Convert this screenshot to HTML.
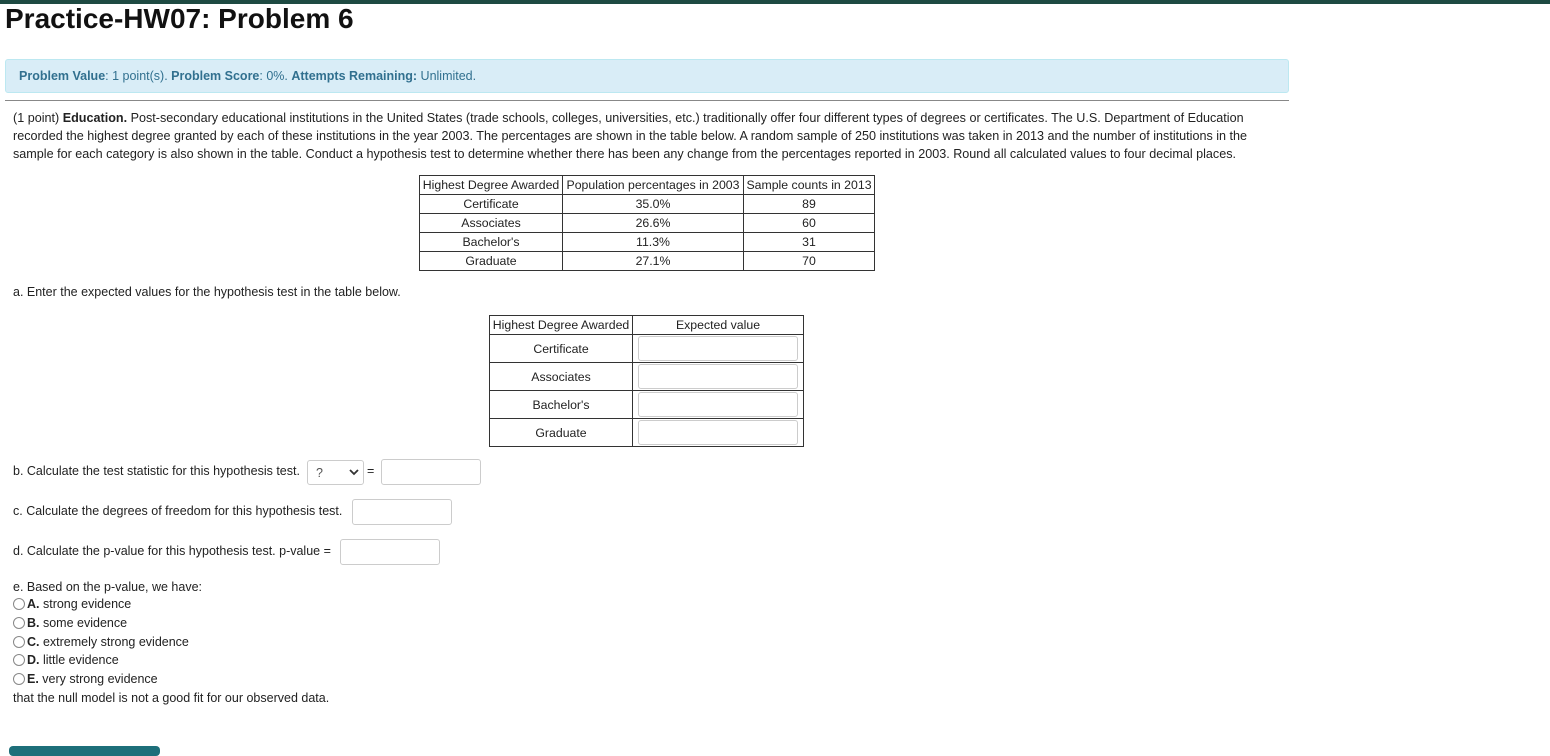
<!DOCTYPE html>
<html><head><meta charset="utf-8"><style>
*{box-sizing:border-box;margin:0;padding:0}
body{width:1550px;height:749px;overflow:hidden;background:#fff;font-family:"Liberation Sans",Arial,sans-serif;font-size:12.5px;color:#222;position:relative}
.a{position:absolute;white-space:nowrap}
.bar{position:absolute;left:0;top:0;width:1550px;height:4px;background:#1e4a42}
h1{position:absolute;left:5px;top:3px;font-size:28px;font-weight:bold;color:#111}
.info{position:absolute;left:5px;top:59px;width:1284px;height:34px;background:#d9edf7;border:1px solid #bce8f1;border-radius:3px;color:#31708f;padding:9px 13px;font-size:12.5px}
.hr{position:absolute;left:5px;top:100px;width:1284px;height:1px;background:#888}
.p{position:absolute;left:13px;top:109px;width:1260px;line-height:18px;font-size:12.6px}
table{position:absolute;border-collapse:collapse;font-size:12.3px}
td{border:1px solid #333;text-align:center;padding:0 1px;white-space:nowrap}
.t1 td{height:19px}
.t2 td{height:28px}
.t2 tr:first-child td{height:19px}
.in{border:1px solid #ccc;border-radius:3px;background:#fff}
.t2 .in{width:160px;height:25px;margin:0 auto}
.rad{display:inline-block;width:12px;height:12px;border:1px solid #888;border-radius:50%;vertical-align:-2px;margin-right:2px}
</style></head><body>
<div class="bar"></div>
<h1>Practice-HW07: Problem 6</h1>
<div class="info"><b>Problem Value</b>: 1 point(s). <b>Problem Score</b>: 0%. <b>Attempts Remaining:</b> Unlimited.</div>
<div class="hr"></div>
<div class="p">(1 point) <b>Education.</b> Post-secondary educational institutions in the United States (trade schools, colleges, universities, etc.) traditionally offer four different types of degrees or certificates. The U.S. Department of Education recorded the highest degree granted by each of these institutions in the year 2003. The percentages are shown in the table below. A random sample of 250 institutions was taken in 2013 and the number of institutions in the sample for each category is also shown in the table. Conduct a hypothesis test to determine whether there has been any change from the percentages reported in 2003. Round all calculated values to four decimal places.</div>
<table class="t1" style="left:419px;top:175px;width:456px">
<tr><td style="width:143px">Highest Degree Awarded</td><td style="width:181px">Population percentages in 2003</td><td>Sample counts in 2013</td></tr>
<tr><td>Certificate</td><td>35.0%</td><td>89</td></tr>
<tr><td>Associates</td><td>26.6%</td><td>60</td></tr>
<tr><td>Bachelor's</td><td>11.3%</td><td>31</td></tr>
<tr><td>Graduate</td><td>27.1%</td><td>70</td></tr>
</table>
<div class="a" style="left:13px;top:285px">a. Enter the expected values for the hypothesis test in the table below.</div>
<table class="t2" style="left:489px;top:315px;width:315px">
<tr><td style="width:143px">Highest Degree Awarded</td><td>Expected value</td></tr>
<tr><td>Certificate</td><td><div class="in"></div></td></tr>
<tr><td>Associates</td><td><div class="in"></div></td></tr>
<tr><td>Bachelor's</td><td><div class="in"></div></td></tr>
<tr><td>Graduate</td><td><div class="in"></div></td></tr>
</table>
<div class="a" style="left:13px;top:464px">b. Calculate the test statistic for this hypothesis test.</div>
<div class="a in" style="left:307px;top:460px;width:57px;height:25px;padding:5px 8px;color:#555">?</div>
<svg class="a" style="left:348px;top:467px" width="12" height="10"><path d="M2 3l4 4 4-4" stroke="#333" stroke-width="1.8" fill="none"/></svg>
<div class="a" style="left:367px;top:464px">=</div>
<div class="a in" style="left:381px;top:459px;width:100px;height:26px"></div>
<div class="a" style="left:13px;top:504px">c. Calculate the degrees of freedom for this hypothesis test.</div>
<div class="a in" style="left:352px;top:499px;width:100px;height:26px"></div>
<div class="a" style="left:13px;top:544px">d. Calculate the p-value for this hypothesis test. p-value =</div>
<div class="a in" style="left:340px;top:539px;width:100px;height:26px"></div>
<div class="a" style="left:13px;top:580px">e. Based on the p-value, we have:</div>
<div class="a" style="left:13px;top:597px"><span class="rad"></span><b>A.</b> strong evidence</div>
<div class="a" style="left:13px;top:616px"><span class="rad"></span><b>B.</b> some evidence</div>
<div class="a" style="left:13px;top:635px"><span class="rad"></span><b>C.</b> extremely strong evidence</div>
<div class="a" style="left:13px;top:653px"><span class="rad"></span><b>D.</b> little evidence</div>
<div class="a" style="left:13px;top:672px"><span class="rad"></span><b>E.</b> very strong evidence</div>
<div class="a" style="left:13px;top:691px">that the null model is not a good fit for our observed data.</div>
<div class="a" style="left:9px;top:746px;width:151px;height:10px;background:#1d6f7a;border-radius:4px"></div>
</body></html>
